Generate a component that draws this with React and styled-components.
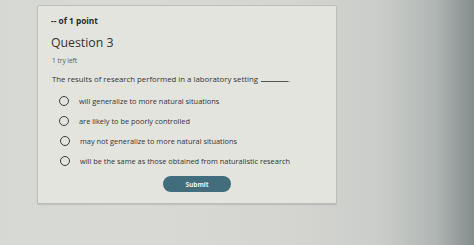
import React from 'react';
import styled, { createGlobalStyle } from 'styled-components';

const GlobalStyle = createGlobalStyle`
  html, body {
    margin: 0;
    padding: 0;
    width: 474px;
    height: 245px;
    overflow: hidden;
  }
  body {
    font-family: "Open Sans", "Liberation Sans", sans-serif;
  }
`;

const Screen = styled.div`
  width: 474px;
  height: 245px;
  box-sizing: border-box;
  padding: 5px 0 0 37px;
  background: linear-gradient(
    90deg,
    #d6d8d3 0%,
    #d8d9d4 30%,
    #d4d5d1 62%,
    #cbcdca 80%,
    #b0b5b3 92%,
    #858d8c 100%
  );
`;

const Card = styled.div`
  width: 300px;
  box-sizing: border-box;
  padding: 9px 13px 11px 13px;
  background: #e4e4df;
  border: 1px solid #bdbeba;
  border-radius: 2px;
  box-shadow: 0 1px 1px rgba(0, 0, 0, 0.12);
  color: #2e2f30;
`;

const Points = styled.div`
  font-size: 8.3px;
  line-height: 12px;
  font-weight: 700;
  color: #2a2a2a;
`;

const Title = styled.h2`
  margin: 8px 0 0 0;
  font-size: 12.3px;
  line-height: 16px;
  font-weight: 400;
  color: #333;
`;

const Tries = styled.div`
  margin-top: 5px;
  font-size: 6.5px;
  line-height: 10px;
  color: #555;
  padding-left: 1px;
`;

const Prompt = styled.p`
  margin: 7px 0 0 1px;
  font-size: 7.8px;
  line-height: 12px;
  color: #333;
`;

const Blank = styled.span`
  display: inline-block;
  width: 27px;
  margin-left: 3px;
  border-bottom: 1px solid #555;
`;

const Options = styled.div`
  margin-top: 6px;
  display: flex;
  flex-direction: column;
`;

const Option = styled.label`
  display: flex;
  align-items: center;
  height: 20px;
  gap: 10px;
  padding-left: ${(p) => p.$indent}px;
  font-size: 7.4px;
  color: #333;
`;

const Radio = styled.span`
  width: 8px;
  height: 8px;
  border: 1.6px solid #3a3c3e;
  border-radius: 50%;
  flex-shrink: 0;
`;

const Footer = styled.div`
  margin-top: 5px;
  display: flex;
  padding-left: 112px;
`;

const SubmitButton = styled.button`
  width: 68px;
  height: 16px;
  border: none;
  border-radius: 8px;
  background: #416d7c;
  color: #eef2f3;
  font-family: "Open Sans", "Liberation Sans", sans-serif;
  font-size: 6.5px;
  font-weight: 700;
  padding: 0;
`;

const options = [
  { text: 'will generalize to more natural situations', indent: 8 },
  { text: 'are likely to be poorly controlled', indent: 8 },
  { text: 'may not generalize to more natural situations', indent: 9 },
  { text: 'will be the same as those obtained from naturalistic research', indent: 9 },
];

export default function App() {
  return (
    <>
      <GlobalStyle />
      <Screen>
        <Card>
          <Points>-- of 1 point</Points>
          <Title>Question 3</Title>
          <Tries>1 try left</Tries>
          <Prompt>
            The results of research performed in a laboratory setting
            <Blank />.
          </Prompt>
          <Options>
            {options.map((o) => (
              <Option key={o.text} $indent={o.indent}>
                <Radio />
                {o.text}
              </Option>
            ))}
          </Options>
          <Footer>
            <SubmitButton>Submit</SubmitButton>
          </Footer>
        </Card>
      </Screen>
    </>
  );
}
